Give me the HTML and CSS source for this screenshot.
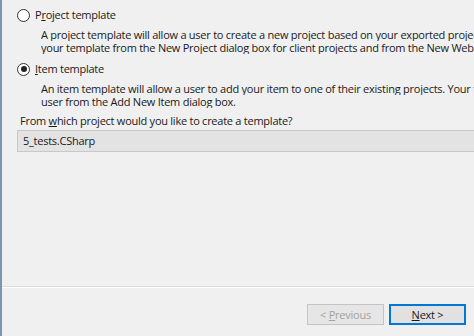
FILE: index.html
```html
<!DOCTYPE html>
<html>
<head>
<meta charset="utf-8">
<link rel="stylesheet" href="styles.css">
</head>
<body>
<div class="frame">
  <div class="content">
    <div class="option">
      <span class="radio"></span>
      <span class="label">P<u>r</u>oject template</span>
    </div>
    <div class="desc">
      <div class="line">A project template will allow a user to create a new project based on your exported project template.</div>
      <div class="line">your template from the New Project dialog box for client projects and from the New Web-site dialog box.</div>
    </div>
    <div class="option second">
      <span class="radio checked"></span>
      <span class="label"><u>I</u>tem template</span>
    </div>
    <div class="desc">
      <div class="line">An item template will allow a user to add your item to one of their existing projects. Your template will be available to the</div>
      <div class="line">user from the Add New Item dialog box.</div>
    </div>
    <div class="question">From <u>w</u>hich project would you like to create a template?</div>
    <div class="select">5_tests.CSharp</div>
  </div>
  <div class="footer">
    <div class="buttons">
      <button class="btn disabled">&lt; <u>P</u>revious</button>
      <button class="btn primary"><u>N</u>ext &gt;</button>
    </div>
  </div>
</div>
</body>
</html>
```
FILE: styles.css
```css
html, body {
  margin: 0;
  padding: 0;
}
body {
  width: 474px;
  height: 336px;
  overflow: hidden;
  background: #f0f0f0;
  font-family: "Open Sans", "Noto Sans", sans-serif;
  font-size: 11px;
  letter-spacing: -0.25px;
  color: #1a1a1a;
}
.frame {
  height: 336px;
  border-left: 2px solid #7b96b4;
  display: flex;
  flex-direction: column;
  box-sizing: border-box;
}
.content {
  flex: 1;
  padding-top: 8px;
  overflow: hidden;
}
.option {
  display: flex;
  align-items: center;
  height: 14px;
  line-height: 14px;
  padding-left: 15px;
}
.option.second {
  margin-top: 8px;
}
.radio {
  width: 11px;
  height: 11px;
  border: 1px solid #333;
  border-radius: 50%;
  background: #fff;
  margin-right: 5px;
  position: relative;
  flex: none;
}
.radio.checked::after {
  content: "";
  position: absolute;
  left: 2.5px;
  top: 2.5px;
  width: 6px;
  height: 6px;
  border-radius: 50%;
  background: #222;
}
.label {
  white-space: nowrap;
}
.desc {
  margin-top: 6px;
  padding-left: 39px;
  overflow: hidden;
}
.line {
  height: 13px;
  line-height: 13px;
  white-space: nowrap;
  overflow: hidden;
}
.question {
  margin-top: 6px;
  padding-left: 18px;
  height: 13px;
  line-height: 13px;
  white-space: nowrap;
}
.select {
  margin-top: 3px;
  margin-left: 15px;
  height: 20px;
  line-height: 20px;
  background: #e3e3e3;
  border: 1px solid #c8c8c8;
  border-right: none;
  padding-left: 5px;
}
.footer {
  height: 50px;
  border-top: 1px solid #dcdcdc;
  box-shadow: inset 0 1px 0 #ffffff;
  box-sizing: border-box;
}
.buttons {
  display: flex;
  justify-content: flex-end;
  gap: 5px;
  padding-top: 17px;
  padding-right: 8px;
}
.btn {
  width: 77px;
  height: 21px;
  font-family: "Open Sans", "Noto Sans", sans-serif;
  font-size: 11px;
  letter-spacing: -0.25px;
  background: #e1e1e1;
  border: 1px solid #adadad;
  padding: 0;
  color: #1a1a1a;
}
.btn.disabled {
  background: #e6e6e6;
  border-color: #c4c4c4;
  color: #a3a3a3;
}
.btn.primary {
  border: 2px solid #0078d7;
}
```
